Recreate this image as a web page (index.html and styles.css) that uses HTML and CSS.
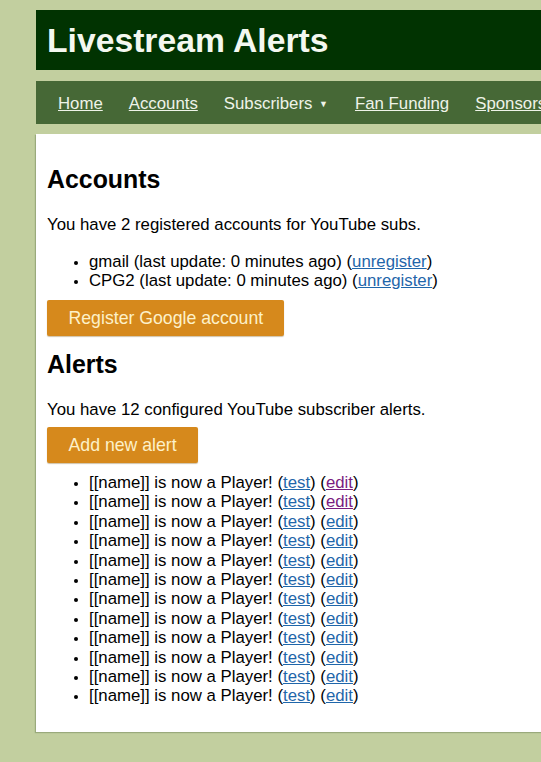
FILE: index.html
```html
<!DOCTYPE html>
<html lang="en">
<head>
<meta charset="utf-8">
<title>Livestream Alerts</title>
<link rel="stylesheet" href="styles.css">
</head>
<body>
<div class="page">
  <header class="site-header">
    <h1 class="site-title">Livestream Alerts</h1>
  </header>
  <nav class="site-nav">
    <a class="nav-link" href="#">Home</a>
    <a class="nav-link" href="#">Accounts</a>
    <span class="nav-link nav-dropdown">Subscribers <span class="caret">&#9660;</span></span>
    <a class="nav-link" href="#">Fan Funding</a>
    <a class="nav-link" href="#">Sponsors</a>
  </nav>
  <main class="content">
    <h2 class="section-title">Accounts</h2>
    <p class="intro">You have 2 registered accounts for YouTube subs.</p>
    <ul class="item-list accounts">
      <li>gmail (last update: 0 minutes ago) (<a href="#">unregister</a>)</li>
      <li>CPG2 (last update: 0 minutes ago) (<a href="#">unregister</a>)</li>
    </ul>
    <div class="actions"><a class="btn" href="#">Register Google account</a></div>
    <h2 class="section-title">Alerts</h2>
    <p class="intro tight">You have 12 configured YouTube subscriber alerts.</p>
    <div class="actions alerts-actions"><a class="btn" href="#">Add new alert</a></div>
    <ul class="item-list alerts">
      <li>[[name]] is now a Player! (<a href="#">test</a>) (<a class="visited" href="#">edit</a>)</li>
      <li>[[name]] is now a Player! (<a href="#">test</a>) (<a class="visited" href="#">edit</a>)</li>
      <li>[[name]] is now a Player! (<a href="#">test</a>) (<a href="#">edit</a>)</li>
      <li>[[name]] is now a Player! (<a href="#">test</a>) (<a href="#">edit</a>)</li>
      <li>[[name]] is now a Player! (<a href="#">test</a>) (<a href="#">edit</a>)</li>
      <li>[[name]] is now a Player! (<a href="#">test</a>) (<a href="#">edit</a>)</li>
      <li>[[name]] is now a Player! (<a href="#">test</a>) (<a href="#">edit</a>)</li>
      <li>[[name]] is now a Player! (<a href="#">test</a>) (<a href="#">edit</a>)</li>
      <li>[[name]] is now a Player! (<a href="#">test</a>) (<a href="#">edit</a>)</li>
      <li>[[name]] is now a Player! (<a href="#">test</a>) (<a href="#">edit</a>)</li>
      <li>[[name]] is now a Player! (<a href="#">test</a>) (<a href="#">edit</a>)</li>
      <li>[[name]] is now a Player! (<a href="#">test</a>) (<a href="#">edit</a>)</li>
    </ul>
  </main>
</div>
</body>
</html>
```
FILE: styles.css
```css
html, body {
  margin: 0;
  padding: 0;
  overflow: hidden;
  background: #c2cf9f;
}
body {
  font-family: "Liberation Sans", Arial, sans-serif;
  color: #000;
  height: 762px;
}
.page {
  margin-left: 36px;
  padding-top: 10px;
  width: 640px;
}
.site-header {
  background: #013301;
  height: 60px;
  padding: 0 11px;
  box-sizing: border-box;
  display: flex;
  align-items: center;
}
.site-title {
  margin: 0;
  font-size: 33.7px;
  line-height: 38px;
  font-weight: bold;
  color: #f4f8f0;
}
.site-nav {
  margin-top: 11px;
  background: #466836;
  height: 43px;
  box-sizing: border-box;
  padding: 12.5px 0 0 9px;
  display: flex;
  white-space: nowrap;
  font-size: 16.8px;
  line-height: 19.4px;
}
.nav-link {
  color: #eef3e8;
  padding: 0 13px;
  text-decoration: underline;
}
.nav-dropdown {
  text-decoration: none;
  padding-right: 14px;
}
.caret {
  font-size: 9px;
  margin-left: 2px;
  vertical-align: 2px;
}
.content {
  margin-top: 10px;
  background: #fff;
  padding: 30.8px 11px 26px;
  box-shadow: -1px 1px 1px rgba(80, 100, 60, 0.35);
  font-size: 16.8px;
  line-height: 19.4px;
}
.section-title {
  margin: 0 0 21px;
  font-size: 24.9px;
  line-height: 29px;
  font-weight: bold;
}
.intro {
  margin: 0 0 17.5px;
}
.intro.tight {
  margin-bottom: 8px;
}
.item-list {
  margin: 0;
  padding-left: 42px;
}
.item-list li::marker {
  font-size: 14px;
}
.item-list.accounts {
  margin-bottom: 9px;
}
.item-list a {
  color: #1f66aa;
}
.item-list a.visited {
  color: #7a1b7f;
}
.actions {
  margin-bottom: 14px;
}
.alerts-actions {
  margin-bottom: 10px;
}
.btn {
  display: inline-block;
  height: 36px;
  box-sizing: border-box;
  padding: 1px 21px 0 21.5px;
  line-height: 35px;
  font-size: 17.7px;
  background: #d6891c;
  color: #fdf1c9;
  text-decoration: none;
  border-radius: 2px;
  box-shadow: 0 1px 1px rgba(120, 80, 10, 0.35);
}
```
